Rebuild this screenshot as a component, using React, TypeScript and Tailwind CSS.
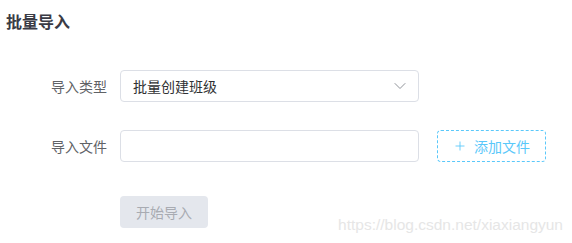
import { ChevronDown, Plus } from 'lucide-react';

export default function App() {
  return (
    <main
      className="relative w-[572px] h-[243px] bg-white overflow-hidden"
      style={{ fontFamily: '"Noto Sans CJK SC", "Noto Sans", sans-serif' }}
    >
      <h2 className="pl-[6px] pt-[10px] text-[16px] leading-[22px] font-bold text-[#3a3b45]">
        批量导入
      </h2>

      <div className="mt-[38px] flex flex-col">
        {/* 导入类型 */}
        <div className="flex items-center h-[32px]">
          <label className="w-[120px] pr-[13px] text-right text-[14px] text-[#606266]">
            导入类型
          </label>
          <div className="flex items-center justify-between w-[299px] h-[32px] border border-[#dcdfe6] rounded-[4px] pl-[12px] pr-[8px]">
            <span className="text-[14px] text-[#303133]">批量创建班级</span>
            <ChevronDown className="w-[20px] h-[20px] text-[#909399]" strokeWidth={1.2} />
          </div>
        </div>

        {/* 导入文件 */}
        <div className="flex items-center h-[32px] mt-[28px]">
          <label className="w-[120px] pr-[13px] text-right text-[14px] text-[#606266]">
            导入文件
          </label>
          <div className="w-[299px] h-[32px] border border-[#dcdfe6] rounded-[4px]" />
          <button className="ml-[18px] flex items-center justify-center gap-[7px] w-[109px] h-[32px] border border-dashed border-[#5ac8fa] rounded-[4px] text-[14px] text-[#5ac8fa]">
            <Plus className="w-[14px] h-[14px]" strokeWidth={1.5} />
            添加文件
          </button>
        </div>

        {/* 开始导入 */}
        <div className="flex mt-[34px] pl-[120px]">
          <button className="w-[88px] h-[32px] rounded-[4px] bg-[#e4e7ed] text-[14px] text-[#a8abb2]">
            开始导入
          </button>
        </div>
      </div>

      {/* watermark */}
      <span
        className="absolute right-[9px] bottom-[10px] text-[15.5px] leading-[16px] text-[#e6e6e6]"
        style={{ fontFamily: '"Liberation Sans", Arial, sans-serif' }}
      >
        https://blog.csdn.net/xiaxiangyun
      </span>
    </main>
  );
}
